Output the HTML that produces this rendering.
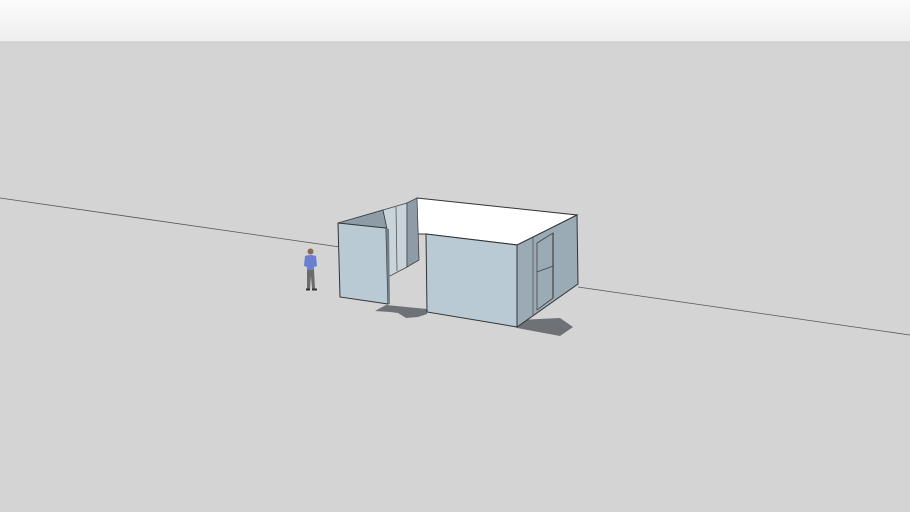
<!DOCTYPE html>
<html><head><meta charset="utf-8"><style>
html,body{margin:0;padding:0;width:910px;height:512px;overflow:hidden;background:#d4d4d4}
svg{display:block}
</style></head><body>
<svg width="910" height="512" viewBox="0 0 910 512" xmlns="http://www.w3.org/2000/svg">
<defs><linearGradient id="sky" x1="0" y1="0" x2="0" y2="1"><stop offset="0" stop-color="#fbfbfb"/><stop offset="1" stop-color="#eeeeee"/></linearGradient></defs>
<rect width="910" height="512" fill="#d4d4d4"/>
<rect width="910" height="42" fill="url(#sky)"/>
<line x1="0" y1="42" x2="910" y2="42" stroke="#c8c8c8" stroke-width="1"/>
<!-- horizon / axis lines -->
<line x1="0" y1="198" x2="340" y2="247" stroke="#555" stroke-width="0.8"/>
<line x1="578" y1="287" x2="910" y2="335" stroke="#555" stroke-width="0.8"/>
<!-- shadows -->
<path d="M375,311 L386,305 L427,309 L427,314 L418,317 L406,318 L398,313 L390,312 Z" fill="#6e7276"/>
<path d="M519,320 L560,318 L573,327 L560,336 L517,328 Z" fill="#6e7276"/>
<!-- white top / interior -->
<path d="M417,198 L577,215 L518,245 L426,234 L417,234 Z" fill="#ffffff" stroke="#333" stroke-width="1"/>
<!-- interior back-left walls -->
<path d="M383,210 L407,203 L407,267 L390,276 L387,276 Z" fill="#c9d4da" stroke="#444" stroke-width="0.8"/>
<line x1="396" y1="207" x2="397" y2="271" stroke="#555" stroke-width="0.8"/>
<path d="M407,203 L417,198 L419,260 L407,267 Z" fill="#8d9ca6" stroke="#444" stroke-width="0.8"/>
<!-- left wall inner dark -->
<path d="M338,223 L383,210 L387,229 Z" fill="#8d9ca6" stroke="#333" stroke-width="0.8"/>
<!-- left wall front -->
<path d="M338,223 L386,228 L388,304 L340,297 Z" fill="#b9cad5" stroke="#333" stroke-width="1"/>
<path d="M386,228 L389,229 L390,304 L388,304 Z" fill="#6f7f89"/>
<!-- front right wall -->
<path d="M426,234 L517,245 L517,327 L427,312 Z" fill="#b9cad5" stroke="#333" stroke-width="1"/>
<!-- right wall -->
<path d="M517,245 L577,215 L578,284 L517,327 Z" fill="#9aabb5" stroke="#333" stroke-width="1"/>
<line x1="533" y1="237" x2="533" y2="316" stroke="#555" stroke-width="0.8"/>
<path d="M537,243 L553,233 L553,298 L537,310 Z" fill="#9aabb5" stroke="#444" stroke-width="0.8"/>
<line x1="537" y1="272" x2="553" y2="266" stroke="#444" stroke-width="0.8"/>
<line x1="553" y1="233" x2="553" y2="298" stroke="#444" stroke-width="1.2"/>
<!-- person -->
<g>
<circle cx="310.5" cy="251.5" r="3" fill="#8a6a55"/>
<path d="M305,256 Q310,254 316,256 L317,266 L314,267 L314,270 L307,270 L307,267 L304,266 Z" fill="#6a7fd2"/>
<path d="M307,270 L314,270 L315,289 L312,289 L311,276 L310,289 L307,289 Z" fill="#6b6b6b"/>
<rect x="306" y="288.5" width="4" height="2" fill="#333"/>
<rect x="312" y="288.5" width="5" height="2" fill="#333"/>
</g>
</svg>
</body></html>
